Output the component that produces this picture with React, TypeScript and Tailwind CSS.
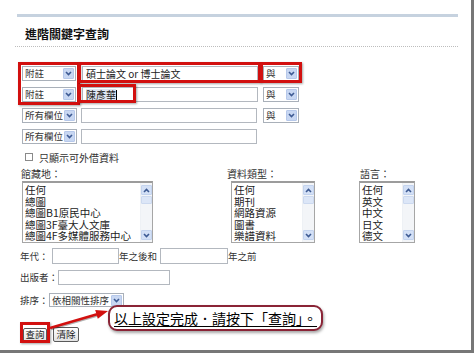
import React from "react";

function Chev({ up = false }: { up?: boolean }) {
  return (
    <svg width="7" height="5" viewBox="0 0 7 5">
      <path
        d={up ? "M1 4 L3.5 1.5 L6 4" : "M1 1 L3.5 3.5 L6 1"}
        fill="none"
        stroke="#3d5a93"
        strokeWidth="1.6"
      />
    </svg>
  );
}

function Select({ w, text, h = 15 }: { w: string; text: string; h?: number }) {
  return (
    <div className={`${w} ${h === 15 ? "h-[15px]" : "h-[14px]"} border border-[#a9b0b9] bg-white flex items-center shrink-0`}>
      <span className="flex-1 pl-[2px] text-[9.5px] leading-[11px] text-[#333] whitespace-nowrap">{text}</span>
      <div className="w-[11px] h-[11px] mr-[1px] bg-[#c8d7f2] border border-[#b6c8ea] rounded-[1px] flex items-center justify-center shrink-0">
        <Chev />
      </div>
    </div>
  );
}

function Input({ w, h = "h-[15px]", children }: { w: string; h?: string; children?: React.ReactNode }) {
  return (
    <div className={`${w} ${h} border border-[#b3b8bf] bg-white shrink-0 flex items-center text-[10px] leading-[11px] text-[#222] pl-[3px] whitespace-nowrap`}>
      {children}
    </div>
  );
}

function ListBox({ w, items }: { w: string; items: string[] }) {
  return (
    <div className={`${w} h-[62px] border border-[#a6a6a6] border-t-2 border-t-[#9c9c9c] bg-white flex shrink-0`}>
      <div className="flex-1 pl-[2px] pt-[1px] flex flex-col text-[10.5px] leading-[11.5px] text-[#222] whitespace-nowrap">
        {items.map((it) => (
          <span key={it}>{it}</span>
        ))}
      </div>
      <div className="w-[12px] flex flex-col bg-[#f3f5f8] border-l border-[#eef1f5]">
        <div className="h-[10px] bg-[#d3e0f6] border border-[#c3d3ee] rounded-[1px] flex items-center justify-center mt-[2px]">
          <Chev up />
        </div>
        <div className="h-[8px] mt-[1px] bg-[#dce6f7] border border-[#ccd9ef] rounded-[1px]" />
        <div className="flex-1" />
        <div className="h-[10px] bg-[#d3e0f6] border border-[#c3d3ee] rounded-[1px] flex items-center justify-center mb-[2px]">
          <Chev />
        </div>
      </div>
    </div>
  );
}

function RedBox({ cls }: { cls: string }) {
  return <div className={`absolute border-[3px] border-[#d2100f] shadow-[1px_1px_2px_rgba(0,0,0,0.35)] ${cls}`} />;
}

export default function App() {
  return (
    <div className="w-[474px] h-[353px] bg-white relative font-['Noto_Sans_CJK_TC','Noto_Sans',sans-serif] overflow-hidden">
      <div className="w-[474px] h-[353px] border-r-[3px] border-b-[3px] border-[#777] bg-white flex flex-col">
        {/* header */}
        <div className="mt-[14px] ml-[17px] w-[441px] h-[3px] bg-[#c6d2df]" />
        <div className="mt-[9px] ml-[25px] text-[12px] font-bold leading-[16px] text-[#111]">進階關鍵字查詢</div>
        <div className="mt-[4px] ml-[15px] w-[443px] border-t border-dotted border-[#bdbdbd]" />

        {/* keyword rows */}
        <div className="mt-[19px] ml-[22px] flex flex-col gap-[6px]">
          <div className="flex items-center h-[15px]">
            <Select w="w-[54px]" text="附註" />
            <div className="ml-[6px]">
              <Input w="w-[176px]">碩士論文 or 博士論文</Input>
            </div>
            <div className="ml-[5px]">
              <Select w="w-[36px]" text="與" />
            </div>
          </div>
          <div className="flex items-center h-[15px]">
            <Select w="w-[54px]" text="附註" />
            <div className="ml-[6px]">
              <Input w="w-[176px]">
                <span className="bg-[#dfe6f2]">陳彥華</span>
                <span className="w-px h-[10px] bg-black" />
              </Input>
            </div>
            <div className="ml-[5px]">
              <Select w="w-[36px]" text="與" />
            </div>
          </div>
          <div className="flex items-center h-[15px]">
            <Select w="w-[55px]" text="所有欄位" />
            <div className="ml-[4px]">
              <Input w="w-[176px]" />
            </div>
            <div className="ml-[6px]">
              <Select w="w-[36px]" text="與" />
            </div>
          </div>
          <div className="flex items-center h-[15px]">
            <Select w="w-[55px]" text="所有欄位" />
            <div className="ml-[4px]">
              <Input w="w-[176px]" />
            </div>
          </div>
        </div>

        {/* checkbox */}
        <div className="mt-[8px] ml-[25px] flex items-center h-[10px]">
          <div className="w-[8px] h-[8px] border border-[#8a8a8a] bg-white shrink-0" />
          <span className="ml-[6px] text-[10px] leading-[11px] text-[#333] whitespace-nowrap">只顯示可外借資料</span>
        </div>

        {/* lists */}
        <div className="mt-[6px] flex">
          <div className="ml-[21px] w-[206px] flex flex-col shrink-0">
            <span className="text-[10px] leading-[12px] text-[#333]">館藏地：</span>
            <div className="mt-[1px] ml-[1px]">
              <ListBox w="w-[131px]" items={["任何", "總圖", "總圖B1原民中心", "總圖3F臺大人文庫", "總圖4F多媒體服務中心"]} />
            </div>
          </div>
          <div className="w-[132px] flex flex-col shrink-0">
            <span className="text-[10px] leading-[12px] text-[#333]">資料類型：</span>
            <div className="mt-[1px] ml-[4px]">
              <ListBox w="w-[84px]" items={["任何", "期刊", "網路資源", "圖書", "樂譜資料"]} />
            </div>
          </div>
          <div className="flex flex-col">
            <span className="ml-[1px] text-[10px] leading-[12px] text-[#333]">語言：</span>
            <div className="mt-[1px]">
              <ListBox w="w-[56px]" items={["任何", "英文", "中文", "日文", "德文"]} />
            </div>
          </div>
        </div>

        {/* year */}
        <div className="mt-[5px] ml-[20px] flex items-center h-[16px] text-[9.5px] leading-[11px] text-[#333] whitespace-nowrap">
          <span className="w-[32px] shrink-0">年代：</span>
          <Input w="w-[67px]" h="h-[16px]" />
          <span className="w-[41px] shrink-0">年之後和</span>
          <Input w="w-[68px]" h="h-[16px]" />
          <span>年之前</span>
        </div>

        {/* publisher */}
        <div className="mt-[6px] ml-[20px] flex items-center h-[14px] text-[9.5px] leading-[11px] text-[#333] whitespace-nowrap">
          <span className="w-[38px] shrink-0">出版者：</span>
          <Input w="w-[112px]" h="h-[15px]" />
        </div>

        {/* sort */}
        <div className="mt-[9px] ml-[20px] flex items-center h-[14px] text-[9.5px] leading-[11px] text-[#333] whitespace-nowrap">
          <span className="w-[29px] shrink-0">排序：</span>
          <Select w="w-[75px]" text="依相關性排序" h={14} />
        </div>

        {/* buttons */}
        <div className="mt-[20px] ml-[23px] flex items-center gap-[6px]">
          <button className="w-[24px] h-[14px] border border-[#5a5a5a] rounded-[2px] bg-gradient-to-b from-white to-[#e2e2e2] text-[9.5px] leading-[11px] text-[#222] flex items-center justify-center whitespace-nowrap">
            查詢
          </button>
          <button className="w-[26px] h-[15px] border border-[#5a5a5a] rounded-[2px] bg-gradient-to-b from-white to-[#e2e2e2] text-[9.5px] leading-[11px] text-[#222] flex items-center justify-center whitespace-nowrap">
            清除
          </button>
        </div>
      </div>

      {/* annotations */}
      <RedBox cls="left-[18px] top-[62px] w-[62px] h-[43px]" />
      <RedBox cls="left-[78px] top-[62px] w-[183px] h-[21px]" />
      <RedBox cls="left-[78px] top-[84px] w-[58px] h-[19px]" />
      <RedBox cls="left-[260px] top-[62px] w-[42px] h-[21px]" />
      <RedBox cls="left-[20px] top-[322px] w-[30px] h-[21px]" />

      <svg className="absolute left-[48px] top-[305px]" width="64" height="28" viewBox="0 0 64 28">
        <line x1="3" y1="24" x2="50" y2="10.3" stroke="rgba(0,0,0,0.3)" strokeWidth="2.5" />
        <line x1="2" y1="23" x2="49" y2="9.3" stroke="#d2100f" strokeWidth="2.5" />
        <polygon points="60,6 49.8,13.7 47.2,5.1" fill="#d2100f" />
      </svg>

      <div className="absolute left-[108px] top-[305px] w-[215px] h-[26px] rounded-[9px] border-2 border-[#8a2436] bg-white shadow-[1px_2px_3px_rgba(0,0,0,0.35)] flex items-center pl-[4px]">
        <span className="text-[14px] leading-[18px] text-black underline underline-offset-2 whitespace-nowrap">
          以上設定完成．請按下「查詢」。
        </span>
      </div>
    </div>
  );
}
